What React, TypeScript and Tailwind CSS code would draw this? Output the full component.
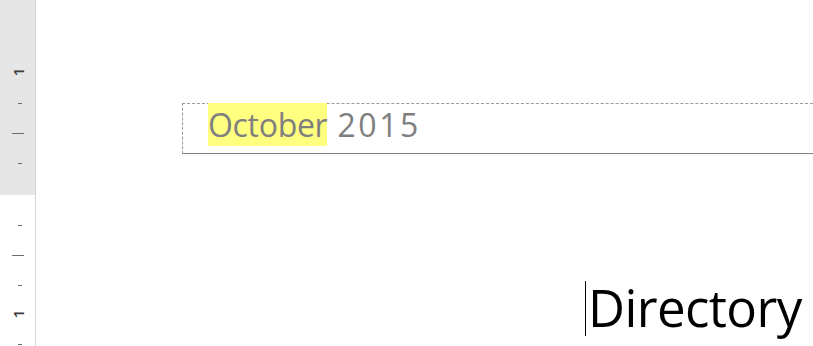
import React from "react";

function Ruler() {
  const ticks = [
    { y: 103, long: false },
    { y: 133, long: true },
    { y: 163, long: false },
    { y: 225, long: false },
    { y: 255, long: true },
    { y: 285, long: false },
    { y: 344, long: false },
  ];
  return (
    <div className="relative w-[36px] h-[346px] shrink-0 border-r border-[#d4d4d4] bg-white">
      <div className="h-[195px] bg-[#e6e6e6]" />
      <svg className="absolute inset-0" width="35" height="346" viewBox="0 0 35 346">
        {ticks.map((t) => (
          <line
            key={t.y}
            x1={t.long ? 12 : 18}
            x2={t.long ? 24 : 22}
            y1={t.y + 0.5}
            y2={t.y + 0.5}
            stroke="#6e6e6e"
            strokeWidth="1"
          />
        ))}
        {[72, 314].map((y) => (
          <text
            key={y}
            x="0"
            y="0"
            transform={`translate(24 ${y}) rotate(-90)`}
            textAnchor="middle"
            fontFamily="Open Sans, sans-serif"
            fontSize="15"
            fontWeight="600"
            fill="#3a3a3a"
          >
            1
          </text>
        ))}
      </svg>
    </div>
  );
}

export default function App() {
  return (
    <div className="flex w-[813px] h-[346px] overflow-hidden bg-white font-['Open_Sans',sans-serif]">
      <Ruler />
      <div className="flex-1 flex flex-col pt-[103px] pl-[146px]">
        <div className="h-[51px] border-t border-l border-dashed border-[#9a9a9a] relative">
          <div className="absolute left-0 right-0 bottom-0 h-px bg-[#808080]" />
          <div className="pl-[25px] text-[32px] leading-[41px] text-[#7f7f7f] tracking-[-0.3px]">
            <span className="bg-[#ffff80]">October</span>{" "}
            <span className="ml-[2px] tracking-[2.6px]">2015</span>
          </div>
        </div>
        <div className="mt-[126px] pl-[403px] flex items-start">
          <div className="w-px h-[55px] bg-black mt-[1px]" />
          <div className="ml-[2px] text-[51px] leading-[54px] text-black tracking-[-0.6px]">Directory</div>
        </div>
      </div>
    </div>
  );
}
